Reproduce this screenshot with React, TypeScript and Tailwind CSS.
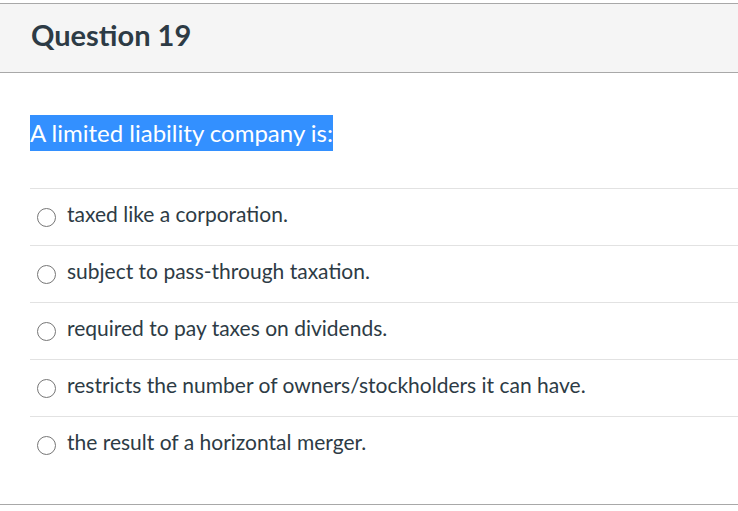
import React from "react";

const options = [
  "taxed like a corporation.",
  "subject to pass-through taxation.",
  "required to pay taxes on dividends.",
  "restricts the number of owners/stockholders it can have.",
  "the result of a horizontal merger.",
];

const App: React.FC = () => {
  return (
    <div
      className="w-[738px] h-[511px] bg-white overflow-hidden pt-[3px] text-[#2d3b45]"
      style={{ fontFamily: "Lato, 'Open Sans', sans-serif" }}
    >
      <div className="h-[70px] border-y border-[#a8a8a8] bg-[#f5f5f5] flex items-center pl-[31px]">
        <h2 className="text-[29px] font-bold leading-none text-[#2d3b45] -mt-[8px]">
          Question 19
        </h2>
      </div>

      <div className="pl-[30px]">
        <div className="pt-[42px] pb-[37px]">
          <span className="bg-[#3390ff] text-white text-[24px] leading-[36px] inline-block">
            A limited liability company is:
          </span>
        </div>
        <div>
          {options.map((option) => (
            <div
              key={option}
              className="h-[57px] border-t border-[#e2e2e2] flex items-center pl-[7px] gap-[11px]"
            >
              <span className="w-[19px] h-[19px] rounded-full border-[1.5px] border-[#767676] bg-white shrink-0" />
              <span className="text-[21px] leading-none text-[#2d3b45] -mt-[7px]">{option}</span>
            </div>
          ))}
        </div>
      </div>
      <div className="mt-[31px] border-t border-[#a8a8a8]" />
    </div>
  );
};

export default App;
